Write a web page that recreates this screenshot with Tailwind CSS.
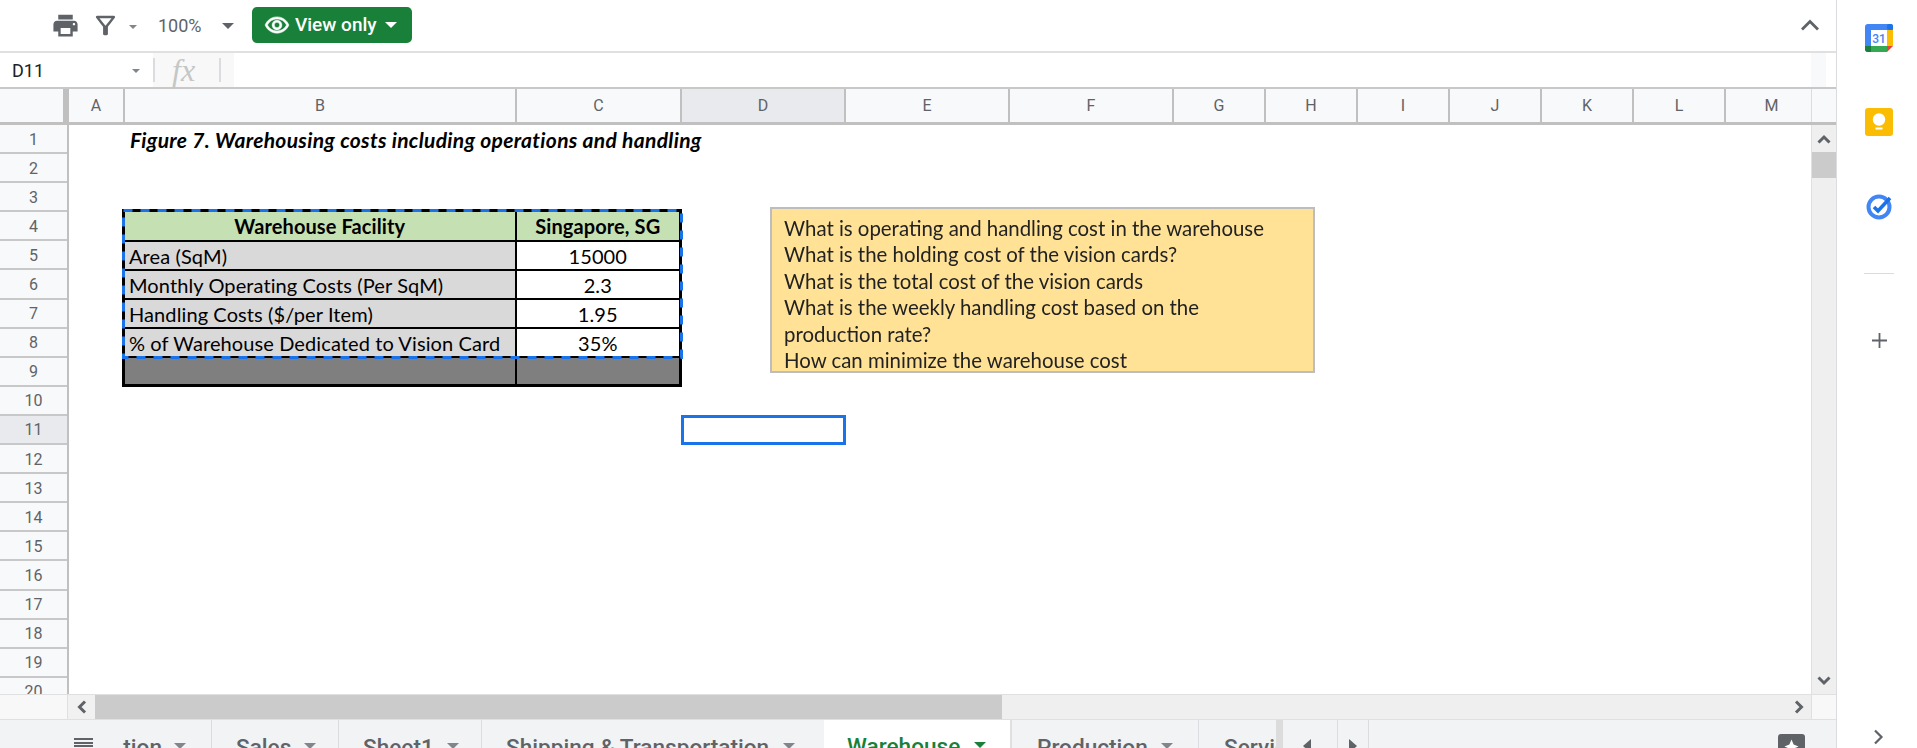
<!DOCTYPE html>
<html>
<head>
<meta charset="utf-8">
<title>Warehouse</title>
<script src="https://cdn.jsdelivr.net/npm/@tailwindcss/browser@4"></script>
</head>
<body class="bg-white overflow-hidden font-['Roboto',sans-serif]">
<div class="flex w-[1917px] h-[748px] overflow-hidden">

	<!-- Main sheet area -->
	<div class="w-[1837px] shrink-0 flex flex-col border-r border-[#dadce0]">

		<!-- Toolbar -->
		<div class="h-[53px] shrink-0 flex items-center border-b-2 border-[#e0e0e0] text-[#5f6368] pb-[1px]">
			<svg class="ml-[51px] w-[29px] h-[29px]" viewBox="0 0 24 24" fill="#5f6368"><path d="M19 8H5c-1.66 0-3 1.34-3 3v6h4v4h12v-4h4v-6c0-1.66-1.34-3-3-3zm-3 11H8v-5h8v5zm3-7c-.55 0-1-.45-1-1s.45-1 1-1 1 .45 1 1-.45 1-1 1zm-1-9H6v4h12V3z"/></svg>
			<svg class="ml-[11px] w-[29px] h-[29px]" viewBox="0 0 24 24" fill="#5f6368"><path d="M7 6h10l-5.01 6.3L7 6zm-2.75-.39C6.27 8.2 10 13 10 13v6c0 .55.45 1 1 1h2c.55 0 1-.45 1-1v-6s3.73-4.8 5.75-7.39C20.26 4.95 19.79 4 18.95 4H5.04c-.83 0-1.3.95-.79 1.61z"/></svg>
			<span class="ml-[9px] mt-[3px] w-0 h-0 border-x-[4px] border-x-transparent border-t-[4px] border-t-[#80868b]"></span>
			<span class="ml-[21px] text-[18px] w-[48px] whitespace-nowrap">100%</span>
			<span class="ml-[16px] mt-[2px] w-0 h-0 border-x-[6px] border-x-transparent border-t-[6px] border-t-[#5f6368]"></span>
			<div class="ml-[18px] w-[160px] h-[36px] rounded-[5px] bg-[#188038] flex items-center text-white text-[19px] font-medium pl-[12px]">
				<svg class="w-[26px] h-[26px] shrink-0" viewBox="0 0 24 24" fill="#fff" stroke="#fff" stroke-width="0.5"><path d="M12 6.5c3.79 0 7.17 2.13 8.82 5.5-1.65 3.37-5.02 5.5-8.82 5.5S4.83 15.37 3.18 12C4.83 8.63 8.21 6.5 12 6.5m0-2C7 4.5 2.73 7.61 1 12c1.73 4.39 6 7.5 11 7.5s9.27-3.11 11-7.5c-1.73-4.39-6-7.5-11-7.5zm0 5c1.38 0 2.5 1.12 2.5 2.5s-1.12 2.5-2.5 2.5-2.5-1.12-2.5-2.5 1.12-2.5 2.5-2.5m0-2c-2.48 0-4.5 2.02-4.5 4.5s2.02 4.5 4.5 4.5 4.5-2.02 4.5-4.5-2.02-4.5-4.5-4.5z"/></svg>
				<span class="ml-[5px] whitespace-nowrap">View only</span>
				<span class="ml-[8px] w-0 h-0 border-x-[6px] border-x-transparent border-t-[6px] border-t-white"></span>
			</div>
			<svg class="ml-auto mr-[16px] w-[20px] h-[14px]" viewBox="0 0 20 14" fill="none" stroke="#5f6368" stroke-width="2.8"><path d="M2 11.5l8-8 8 8"/></svg>
		</div>

		<!-- Formula bar -->
		<div class="h-[36px] shrink-0 flex items-stretch border-b-2 border-[#c8c8c8] bg-white">
			<div class="w-[153px] flex items-center pl-[12px] text-[18px] text-[#202124] relative">
				D11
				<span class="absolute left-[132px] top-[16px] w-0 h-0 border-x-[4px] border-x-transparent border-t-[4px] border-t-[#80868b]"></span>
			</div>
			<div class="w-[81px] bg-[#f8f8f8] flex items-center">
				<span class="w-[2px] h-[24px] bg-[#dadce0]"></span>
				<span class="ml-[17px] w-[47px] text-[32px] italic text-[#c4c7c5] font-['Liberation_Serif',serif] leading-none">fx</span>
				<span class="w-[2px] h-[24px] bg-[#dadce0]"></span>
			</div>
			<div class="flex-1"></div>
			<div class="w-[15px] bg-[#f8f9fa]"></div>
			<div class="w-[10px]"></div>
		</div>

		<!-- Column headers -->
		<div class="h-[36px] shrink-0 flex bg-[#f8f9fa] text-[#5f6368] text-[16px] border-b-[3px] border-[#c0c0c0] relative">
			<div class="w-[69px] shrink-0 border-r-[6px] border-[#c0c0c0]"></div>
			<div class="w-[56px] shrink-0 flex items-center justify-center border-r-2 border-[#c0c0c0]">A</div>
			<div class="w-[392px] shrink-0 flex items-center justify-center border-r-2 border-[#c0c0c0]">B</div>
			<div class="w-[165px] shrink-0 flex items-center justify-center border-r-2 border-[#c0c0c0]">C</div>
			<div class="w-[164px] shrink-0 flex items-center justify-center border-r-2 border-[#c0c0c0] bg-[#e8eaed]">D</div>
			<div class="w-[164px] shrink-0 flex items-center justify-center border-r-2 border-[#c0c0c0]">E</div>
			<div class="w-[164px] shrink-0 flex items-center justify-center border-r-2 border-[#c0c0c0]">F</div>
			<div class="w-[92px] shrink-0 flex items-center justify-center border-r-2 border-[#c0c0c0]">G</div>
			<div class="w-[92px] shrink-0 flex items-center justify-center border-r-2 border-[#c0c0c0]">H</div>
			<div class="w-[92px] shrink-0 flex items-center justify-center border-r-2 border-[#c0c0c0]">I</div>
			<div class="w-[92px] shrink-0 flex items-center justify-center border-r-2 border-[#c0c0c0]">J</div>
			<div class="w-[92px] shrink-0 flex items-center justify-center border-r-2 border-[#c0c0c0]">K</div>
			<div class="w-[92px] shrink-0 flex items-center justify-center border-r-2 border-[#c0c0c0]">L</div>
			<div class="w-[85px] shrink-0 flex items-center justify-center pl-[6px]">M</div>
			<div class="flex-1 border-l border-[#dadce0]"></div>
		</div>

		<!-- Grid with scrollbars -->
		<div class="h-[569px] shrink-0 flex">
			<div class="w-[69px] shrink-0 h-full overflow-hidden border-r-2 border-[#c0c0c0] bg-[#f8f9fa] text-[#5f6368] text-[16px]">
				<div class="h-[29.1px] flex items-center justify-center border-b-2 border-[#c8c8c8] pt-[2px]">1</div>
				<div class="h-[29.1px] flex items-center justify-center border-b-2 border-[#c8c8c8] pt-[2px]">2</div>
				<div class="h-[29.1px] flex items-center justify-center border-b-2 border-[#c8c8c8] pt-[2px]">3</div>
				<div class="h-[29.1px] flex items-center justify-center border-b-2 border-[#c8c8c8] pt-[2px]">4</div>
				<div class="h-[29.1px] flex items-center justify-center border-b-2 border-[#c8c8c8] pt-[2px]">5</div>
				<div class="h-[29.1px] flex items-center justify-center border-b-2 border-[#c8c8c8] pt-[2px]">6</div>
				<div class="h-[29.1px] flex items-center justify-center border-b-2 border-[#c8c8c8] pt-[2px]">7</div>
				<div class="h-[29.1px] flex items-center justify-center border-b-2 border-[#c8c8c8] pt-[2px]">8</div>
				<div class="h-[29.1px] flex items-center justify-center border-b-2 border-[#c8c8c8] pt-[2px]">9</div>
				<div class="h-[29.1px] flex items-center justify-center border-b-2 border-[#c8c8c8] pt-[2px]">10</div>
				<div class="h-[29.1px] flex items-center justify-center border-b-2 border-[#c8c8c8] pt-[2px] bg-[#e8eaed]">11</div>
				<div class="h-[29.1px] flex items-center justify-center border-b-2 border-[#c8c8c8] pt-[2px]">12</div>
				<div class="h-[29.1px] flex items-center justify-center border-b-2 border-[#c8c8c8] pt-[2px]">13</div>
				<div class="h-[29.1px] flex items-center justify-center border-b-2 border-[#c8c8c8] pt-[2px]">14</div>
				<div class="h-[29.1px] flex items-center justify-center border-b-2 border-[#c8c8c8] pt-[2px]">15</div>
				<div class="h-[29.1px] flex items-center justify-center border-b-2 border-[#c8c8c8] pt-[2px]">16</div>
				<div class="h-[29.1px] flex items-center justify-center border-b-2 border-[#c8c8c8] pt-[2px]">17</div>
				<div class="h-[29.1px] flex items-center justify-center border-b-2 border-[#c8c8c8] pt-[2px]">18</div>
				<div class="h-[29.1px] flex items-center justify-center border-b-2 border-[#c8c8c8] pt-[2px]">19</div>
				<div class="h-[29.1px] flex items-center justify-center border-b-2 border-[#c8c8c8] pt-[2px]">20</div>
			</div>

			<!-- Canvas: table picture, note and selection float over the cells -->
			<div class="flex-1 relative overflow-hidden bg-white font-['Lato',sans-serif]">
				<div class="pl-[61px] pt-[3px] text-[21px] tracking-[0.32px] leading-[24px] font-bold italic text-black whitespace-nowrap">Figure 7. Warehousing costs including operations and handling</div>

				<table class="absolute left-[53px] top-[84px] w-[560px] border-collapse border-[3px] border-black text-[20px] tracking-[0.1px] leading-none text-black table-fixed">
					<colgroup><col class="w-[392px]"><col></colgroup>
					<tr class="h-[30px] bg-[#c5e0b3] font-bold text-center">
						<td class="border-2 border-black">Warehouse Facility</td>
						<td class="border-2 border-black">Singapore, SG</td>
					</tr>
					<tr class="h-[29px]">
						<td class="border-2 border-black bg-[#d9d9d9] pl-[4px] pt-[2px]">Area (SqM)</td>
						<td class="border-2 border-black text-center pt-[2px]">15000</td>
					</tr>
					<tr class="h-[29px]">
						<td class="border-2 border-black bg-[#d9d9d9] pl-[4px] pt-[2px]">Monthly Operating Costs (Per SqM)</td>
						<td class="border-2 border-black text-center pt-[2px]">2.3</td>
					</tr>
					<tr class="h-[29px]">
						<td class="border-2 border-black bg-[#d9d9d9] pl-[4px] pt-[2px]">Handling Costs ($/per Item)</td>
						<td class="border-2 border-black text-center pt-[2px]">1.95</td>
					</tr>
					<tr class="h-[29px]">
						<td class="border-2 border-black bg-[#d9d9d9] pl-[4px] pt-[2px]">% of Warehouse Dedicated to Vision Card</td>
						<td class="border-2 border-black text-center pt-[2px]">35%</td>
					</tr>
					<tr class="h-[29px] bg-[#7f7f7f]">
						<td class="border-2 border-black"></td>
						<td class="border-2 border-black"></td>
					</tr>
				</table>
				<!-- Copy marquee round the table -->
				<svg class="absolute left-[53px] top-[84px] w-[561px] h-[150px]" viewBox="0 0 561 150" fill="none">
					<rect x="1.5" y="1.5" width="558" height="147" stroke="#1a73e8" stroke-width="3" stroke-dasharray="9 8"/>
				</svg>

				<div class="absolute left-[701px] top-[82px] w-[545px] h-[166px] overflow-hidden border-2 border-[#bdbdbd] bg-[#ffe296] pl-[12px] pt-[6px] text-[20.4px] leading-[26.4px] text-[#222] whitespace-nowrap">
					<div class="blur-[0.4px]">
						What is operating and handling cost in the warehouse<br>
						What is the holding cost of the vision cards?<br>
						What is the total cost of the vision cards<br>
						What is the weekly handling cost based on the<br>
						production rate?<br>
						How can minimize the warehouse cost
					</div>
				</div>

				<div class="absolute left-[612px] top-[290px] w-[165px] h-[30px] border-[3px] border-[#1a73e8]"></div>
			</div>

			<!-- Vertical scrollbar -->
			<div class="w-[25px] shrink-0 bg-[#efefef] flex flex-col border-l border-[#e0e0e0]">
				<div class="h-[27px] flex items-center justify-center">
					<svg class="w-[14px] h-[10px]" viewBox="0 0 14 10" fill="none" stroke="#5f6368" stroke-width="3"><path d="M1.5 8.5L7 3l5.5 5.5"/></svg>
				</div>
				<div class="h-[26px] bg-[#cbcbcb]"></div>
				<div class="flex-1"></div>
				<div class="h-[27px] flex items-center justify-center">
					<svg class="w-[14px] h-[10px]" viewBox="0 0 14 10" fill="none" stroke="#5f6368" stroke-width="3"><path d="M1.5 1.5L7 7l5.5-5.5"/></svg>
				</div>
			</div>
		</div>

		<!-- Horizontal scrollbar -->
		<div class="h-[25px] shrink-0 flex border-t border-[#e0e0e0] bg-[#efefef]">
			<div class="w-[68px] shrink-0 bg-[#f8f8f8] border-r border-[#e0e0e0]"></div>
			<div class="w-[27px] shrink-0 bg-[#f1f1f1] flex items-center justify-center">
				<svg class="w-[10px] h-[14px]" viewBox="0 0 10 14" fill="none" stroke="#5f6368" stroke-width="3"><path d="M8 1.5L2.5 7 8 12.5"/></svg>
			</div>
			<div class="w-[907px] shrink-0 bg-[#cbcbcb]"></div>
			<div class="flex-1 flex items-center justify-end pr-[7px]">
				<svg class="w-[10px] h-[14px]" viewBox="0 0 10 14" fill="none" stroke="#5f6368" stroke-width="3"><path d="M2 1.5L7.5 7 2 12.5"/></svg>
			</div>
			<div class="w-[25px] shrink-0 bg-[#f8f8f8] border-l border-[#e0e0e0]"></div>
		</div>

		<!-- Sheet tabs -->
		<div class="h-[29px] shrink-0 flex bg-[#f1f3f4] border-t border-[#e0e0e0] text-[22.6px] leading-[26px] font-medium text-[#5f6368] overflow-hidden relative">
			<div class="w-[116px] shrink-0 pl-[74px] pt-[18px]">
				<div class="w-[19px] h-[9px] border-y-2 border-[#5f6368] flex items-center"><div class="w-full h-[2px] bg-[#5f6368]"></div></div>
			</div>
			<div class="w-[96px] shrink-0 flex justify-end gap-[12px] pr-[25px] pt-[15px] border-r border-[#dadce0] overflow-hidden"><span>tion</span><span class="mt-[8px] w-0 h-0 border-x-[6px] border-x-transparent border-t-[6px] border-t-[#80868b]"></span></div>
			<div class="w-[127px] shrink-0 flex gap-[13px] pl-[24px] pt-[15px] border-r border-[#dadce0]"><span>Sales</span><span class="mt-[8px] w-0 h-0 border-x-[6px] border-x-transparent border-t-[6px] border-t-[#80868b]"></span></div>
			<div class="w-[143px] shrink-0 flex gap-[13px] pl-[24px] pt-[15px] border-r border-[#dadce0]"><span>Sheet1</span><span class="mt-[8px] w-0 h-0 border-x-[6px] border-x-transparent border-t-[6px] border-t-[#80868b]"></span></div>
			<div class="w-[342px] shrink-0 flex gap-[14px] pl-[24px] pt-[15px]"><span class="whitespace-nowrap">Shipping &amp; Transportation</span><span class="mt-[8px] w-0 h-0 border-x-[6px] border-x-transparent border-t-[6px] border-t-[#80868b]"></span></div>
			<div class="w-[188px] shrink-0 flex gap-[14px] pl-[23px] pt-[15px] bg-white text-[#188038] border-r-2 border-[#e0e0e0] -mt-px"><span>Warehouse</span><span class="mt-[8px] w-0 h-0 border-x-[6px] border-x-transparent border-t-[6px] border-t-[#188038]"></span></div>
			<div class="w-[187px] shrink-0 flex gap-[13px] pl-[25px] pt-[15px] border-r border-[#dadce0]"><span>Production</span><span class="mt-[8px] w-0 h-0 border-x-[6px] border-x-transparent border-t-[6px] border-t-[#80868b]"></span></div>
			<div class="w-[84px] shrink-0 pl-[25px] pt-[15px] overflow-hidden border-r-[7px] border-[#dcdcdc] whitespace-nowrap"><span>Service</span></div>
			<div class="w-[55px] shrink-0 border-r border-[#dadce0] relative">
				<span class="absolute left-[20px] top-[19px] w-0 h-0 border-y-[7px] border-y-transparent border-r-[8px] border-r-[#5f6368]"></span>
			</div>
			<div class="w-[31px] shrink-0 border-r border-[#dadce0] relative">
				<span class="absolute left-[11px] top-[19px] w-0 h-0 border-y-[7px] border-y-transparent border-l-[8px] border-l-[#5f6368]"></span>
			</div>
			<!-- Explore button -->
			<div class="absolute left-[1778px] top-[14px] w-[27px] h-[27px] rounded-[3px] bg-[#5f6368] flex justify-center pt-[4px]">
				<svg class="w-[17px] h-[17px]" viewBox="0 0 24 24" fill="#fff"><path d="M12 2l3 7 7 3-7 3-3 7-3-7-7-3 7-3z"/></svg>
			</div>
		</div>
	</div>

	<!-- Side panel -->
	<div class="flex-1 flex flex-col items-center relative pl-[4px]">
		<!-- Calendar -->
		<svg class="mt-[24px] w-[28px] h-[28px]" viewBox="0 0 28 28">
			<path d="M3 0h22a3 3 0 0 1 3 3v3h-6V6H6v16H0V3a3 3 0 0 1 3-3z" fill="#4285f4"/>
			<rect x="22" y="0" width="6" height="6" fill="#1a73e8" rx="2"/>
			<rect x="22" y="6" width="6" height="16" fill="#fbbc04"/>
			<path d="M6 22h16v6H3a3 3 0 0 1-3-3v-3h6z" fill="#34a853"/>
			<path d="M0 22h6v6H3a3 3 0 0 1-3-3z" fill="#188038"/>
			<path d="M22 22h6l-6 6z" fill="#ea4335"/>
			<text x="14" y="19" text-anchor="middle" font-family="Roboto" font-size="12" font-weight="500" fill="#4285f4">31</text>
		</svg>
		<!-- Keep -->
		<div class="mt-[56px] w-[28px] h-[28px] rounded-[3px] bg-[#fbbc04] flex items-center justify-center">
			<svg class="w-[18px] h-[20px]" viewBox="0 0 18 20" fill="#fff"><circle cx="9" cy="7.5" r="6.2"/><rect x="5.5" y="15.5" width="7" height="2"/></svg>
		</div>
		<!-- Tasks -->
		<svg class="mt-[57px] w-[27px] h-[27px]" viewBox="0 0 27 27">
			<circle cx="13" cy="14" r="10.5" fill="none" stroke="#4285f4" stroke-width="4"/>
			<path d="M8 14l4 4L24 5" fill="none" stroke="#1a73e8" stroke-width="3.6"/>
		</svg>
		<div class="mt-[53px] w-[30px] h-px bg-[#dadce0]"></div>
		<svg class="mt-[57px] w-[19px] h-[19px]" viewBox="0 0 19 19" fill="none" stroke="#5f6368" stroke-width="1.8"><path d="M9.5 2v15M2 9.5h15"/></svg>
		<svg class="absolute left-[36px] top-[729px] w-[11px] h-[16px]" viewBox="0 0 11 16" fill="none" stroke="#5f6368" stroke-width="2.2"><path d="M2 1.5L8.5 8 2 14.5"/></svg>
	</div>
</div>
</body>
</html>
